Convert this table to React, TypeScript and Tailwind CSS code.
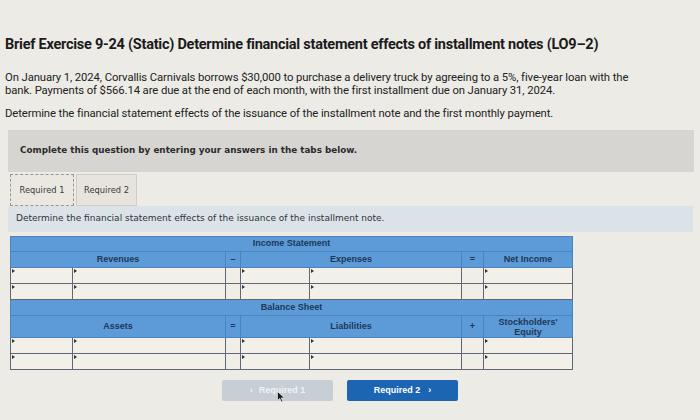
import React from "react";

const cellBorder = "border border-[#5f6873]";

function Marker() {
  return (
    <span className="absolute left-[1px] top-[1px] h-0 w-0 border-y-[2px] border-l-[3px] border-y-transparent border-l-[#2f3439]" />
  );
}

function InputCell() {
  return (
    <td className={`${cellBorder} relative h-[16px] bg-[#f3efe9] p-0`}>
      <Marker />
    </td>
  );
}

function OpCell() {
  return <td className={`${cellBorder} h-[16px] bg-[#f1eee8] p-0`} />;
}

function InputRow() {
  return (
    <tr>
      <InputCell />
      <InputCell />
      <OpCell />
      <InputCell />
      <InputCell />
      <OpCell />
      <InputCell />
    </tr>
  );
}

const head = "border border-[#4b83bd] bg-[#5c9bd7] p-0 text-center text-[9px] font-bold text-[#1d3857]";

export default function App() {
  return (
    <div className="relative h-[420px] w-[700px] overflow-hidden bg-[#ecebe6] font-['Roboto',sans-serif] text-[#222]">
      <div className="px-[5px] pt-[36px]">
        <h1 className="text-[14.5px] font-bold leading-[18px] tracking-[-0.25px] text-[#1b1b1b]">
          Brief Exercise 9-24 (Static) Determine financial statement effects of installment notes (LO9–2)
        </h1>
        <p className="mt-[17px] text-[11.3px] leading-[13px] tracking-[-0.1px]">
          On January 1, 2024, Corvallis Carnivals borrows $30,000 to purchase a delivery truck by agreeing to a 5%, five-year loan with the
          <br />
          bank. Payments of $566.14 are due at the end of each month, with the first installment due on January 31, 2024.
        </p>
        <p className="mt-[10px] text-[11.3px] leading-[13px] tracking-[-0.1px]">
          Determine the financial statement effects of the issuance of the installment note and the first monthly payment.
        </p>
      </div>

      <div className="ml-[8px] mr-[6px] mt-[10px] flex h-[42px] items-center bg-[#d6d5d1] pl-[12px] font-['DejaVu_Sans',sans-serif] text-[8.8px] font-bold text-[#2c2c2c]">
        Complete this question by entering your answers in the tabs below.
      </div>

      <div className="flex h-[34px] items-end gap-[2px] pl-[10px] pt-[2px] font-['DejaVu_Sans',sans-serif] text-[8.3px] text-[#3a3a3a]">
        <div className="flex h-full w-[64px] items-center justify-center border border-dashed border-[#9a978f] bg-[#ebe8e2]">
          Required 1
        </div>
        <div className="flex h-full w-[61px] items-center justify-center border border-[#cfccc4] bg-[#e7e4dd]">
          Required 2
        </div>
      </div>

      <div className="ml-[8px] mr-[7px] flex h-[26px] items-center bg-[#dbe3e8] pl-[8px] font-['DejaVu_Sans',sans-serif] text-[9px] text-[#2e3338]">
        Determine the financial statement effects of the issuance of the installment note.
      </div>

      <table className="ml-[10px] mt-[4px] w-[562px] table-fixed border-collapse border border-[#5f6873] font-['Liberation_Sans',sans-serif]">
        <colgroup>
          <col className="w-[62px]" />
          <col className="w-[153px]" />
          <col className="w-[15px]" />
          <col className="w-[69px]" />
          <col className="w-[152px]" />
          <col className="w-[22px]" />
          <col className="w-[89px]" />
        </colgroup>
        <tbody>
          <tr>
            <td colSpan={7} className={`${head} h-[15px]`}>Income Statement</td>
          </tr>
          <tr>
            <td colSpan={2} className={`${head} h-[16px]`}>Revenues</td>
            <td className={head}>–</td>
            <td colSpan={2} className={head}>Expenses</td>
            <td className={head}>=</td>
            <td className={`${head} text-[9.5px]`}>Net Income</td>
          </tr>
          <InputRow />
          <InputRow />
          <tr>
            <td colSpan={7} className={`${head} h-[16px]`}>Balance Sheet</td>
          </tr>
          <tr>
            <td colSpan={2} className={`${head} h-[22px]`}>Assets</td>
            <td className={head}>=</td>
            <td colSpan={2} className={head}>Liabilities</td>
            <td className={head}>+</td>
            <td className={`${head} leading-[10px]`}>
              Stockholders'
              <br />
              Equity
            </td>
          </tr>
          <InputRow />
          <InputRow />
        </tbody>
      </table>

      <div className="mt-[10px] flex gap-[14px] pl-[222px] font-['Liberation_Sans',sans-serif] text-[9px] font-bold">
        <div className="flex h-[21px] w-[111px] items-center justify-center gap-[6px] rounded-[2px] bg-[#c6cfd6] text-[#eef2f5]">
          <span>‹</span>
          <span>Required 1</span>
        </div>
        <div className="flex h-[21px] w-[111px] items-center justify-center gap-[8px] rounded-[2px] bg-[#1b65b2] text-white">
          <span>Required 2</span>
          <span>›</span>
        </div>
      </div>

      <svg className="absolute left-[277px] top-[391px]" width="8" height="12" viewBox="0 0 8 12">
        <path d="M0.5 0.5 L0.5 9.5 L2.8 7.4 L4.4 11 L5.8 10.4 L4.3 6.9 L7.4 6.9 Z" fill="#1b1b1b" stroke="#fff" strokeWidth="0.6" />
      </svg>
    </div>
  );
}
